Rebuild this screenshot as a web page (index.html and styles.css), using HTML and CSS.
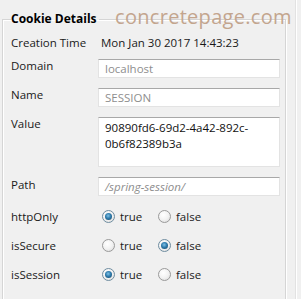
FILE: index.html
```html
<!DOCTYPE html>
<html lang="en">

<head>
    <meta charset="UTF-8">
    <meta name="viewport" content="width=device-width, initial-scale=1.0">
    <title>Cookie Details</title>
    <link rel="stylesheet" href="styles.css">
</head>

<body>
    <div class="page">
        <fieldset class="group">
            <legend>Cookie Details</legend>
            <div class="row text-row">
                <span class="label">Creation Time</span>
                <span class="value">Mon Jan 30 2017 14:43:23</span>
            </div>
            <div class="row first-field">
                <span class="label">Domain</span>
                <div class="field">localhost</div>
            </div>
            <div class="row">
                <span class="label">Name</span>
                <div class="field">SESSION</div>
            </div>
            <div class="row">
                <span class="label">Value</span>
                <div class="field area">90890fd6-69d2-4a42-892c-<br>0b6f82389b3a</div>
            </div>
            <div class="row path-row">
                <span class="label">Path</span>
                <div class="field path">/spring-session/</div>
            </div>
            <div class="row radio-row first-radio">
                <span class="label">httpOnly</span>
                <span class="opt"><i class="radio on"></i>true</span>
                <span class="opt"><i class="radio"></i>false</span>
            </div>
            <div class="row radio-row">
                <span class="label">isSecure</span>
                <span class="opt"><i class="radio"></i>true</span>
                <span class="opt"><i class="radio on"></i>false</span>
            </div>
            <div class="row radio-row">
                <span class="label">isSession</span>
                <span class="opt"><i class="radio on"></i>true</span>
                <span class="opt"><i class="radio"></i>false</span>
            </div>
        </fieldset>
        <div class="side"></div>
        <!-- watermark over the group box -->
        <div class="mark">concretepage.com</div>
    </div>
</body>

</html>
```

FILE: styles.css
```css
* {
    margin: 0;
    padding: 0;
    box-sizing: border-box;
}

body {
    background: #f0f0f0;
    font-family: "Open Sans", "Noto Sans", sans-serif;
    font-size: 11.5px;
    color: #1a1a1a;
}

.page {
    position: relative;
    display: flex;
    height: 299px;
    padding-left: 2px;
}

.group {
    width: 284px;
    margin-top: 11px;
    border: 1px solid #d5d5d5;
    box-shadow: inset 1px 1px 0 #fff, 1px 1px 0 #fff;
    padding: 0 0 0 8px;
    height: 300px;
}

.group legend {
    font-weight: bold;
    font-size: 12px;
    padding: 0 2px 0 0;
    line-height: 16px;
    color: #000;
}

.side {
    width: 1px;
    margin-left: 9px;
    background: #e2e2e2;
    box-shadow: 1px 0 0 #fff;
}

.row {
    display: flex;
    align-items: flex-start;
    margin-top: 10px;
}

.text-row {
    margin-top: 8px;
}

.first-field {
    margin-top: 8px;
}

.path-row {
    margin-top: 10px;
}

.label {
    width: 87px;
    line-height: 16px;
    margin-top: -1px;
}

.text-row .label {
    margin-top: 0;
}

.path-row .label {
    margin-top: 0;
}

.value {
    padding-left: 3px;
    line-height: 16px;
}

.field {
    width: 182px;
    height: 19px;
    background: #fff;
    border: 1px solid #e3e3e3;
    border-top-color: #a8a8a8;
    padding: 1px 6px 0 6px;
    line-height: 16px;
    color: #8e8e8e;
}

.field.area {
    height: 50px;
    padding-top: 2px;
    color: #111;
}

.field.path {
    font-style: italic;
}

.radio-row {
    align-items: center;
    height: 19px;
}

.first-radio {
    margin-top: 11px;
}

.radio-row .label {
    margin-top: 0;
    width: 91px;
}

.radio-row + .radio-row {
    margin-top: 10px;
}

.opt {
    display: flex;
    align-items: center;
    width: 56px;
}

.radio {
    width: 13px;
    height: 13px;
    border-radius: 50%;
    border: 1px solid #9a9a9a;
    background: radial-gradient(circle at 40% 35%, #fff 0%, #f2f2f2 50%, #d8d8d8 100%);
    margin-right: 5px;
    position: relative;
}

.radio.on {
    border-color: #6f8da0;
}

.radio.on::after {
    content: "";
    position: absolute;
    left: 2px;
    top: 2px;
    width: 7px;
    height: 7px;
    border-radius: 50%;
    background: radial-gradient(circle at 45% 40%, #7fc1e6 0%, #2f7cad 45%, #14405e 100%);
}

.mark {
    position: absolute;
    left: 115px;
    top: 3px;
    font-size: 20px;
    letter-spacing: 0.3px;
    color: #c3a58e;
}
```
